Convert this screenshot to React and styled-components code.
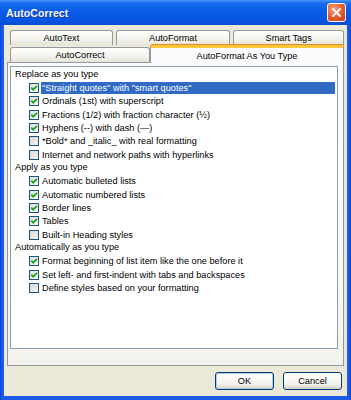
import React from "react";
import styled, { createGlobalStyle } from "styled-components";

const GlobalStyle = createGlobalStyle`
  html, body {
    margin: 0;
    padding: 0;
    width: 351px;
    height: 400px;
    overflow: hidden;
    background: #0831d9;
  }
`;

const sections = [
  {
    title: "Replace as you type",
    items: [
      { label: "\"Straight quotes\" with \"smart quotes\"", checked: true, selected: true },
      { label: "Ordinals (1st) with superscript", checked: true },
      { label: "Fractions (1/2) with fraction character (½)", checked: true },
      { label: "Hyphens (--) with dash (—)", checked: true },
      { label: "*Bold* and _italic_ with real formatting", checked: false },
      { label: "Internet and network paths with hyperlinks", checked: false },
    ],
  },
  {
    title: "Apply as you type",
    items: [
      { label: "Automatic bulleted lists", checked: true },
      { label: "Automatic numbered lists", checked: true },
      { label: "Border lines", checked: true },
      { label: "Tables", checked: true },
      { label: "Built-in Heading styles", checked: false },
    ],
  },
  {
    title: "Automatically as you type",
    items: [
      { label: "Format beginning of list item like the one before it", checked: true },
      { label: "Set left- and first-indent with tabs and backspaces", checked: true },
      { label: "Define styles based on your formatting", checked: false },
    ],
  },
];

export default function App() {
  return (
    <>
      <GlobalStyle />
      <Window>
        <TitleBar>
          <Title>AutoCorrect</Title>
          <CloseButton>
            <svg width="9" height="9" viewBox="0 0 9 9">
              <path d="M1 1 L8 8 M8 1 L1 8" stroke="#fff" strokeWidth="1.8" strokeLinecap="square" />
            </svg>
          </CloseButton>
        </TitleBar>
        <Body>
          <TabStrip>
            <TabRow>
              <Tab $w={103}>AutoText</Tab>
              <Tab $w={115}>AutoFormat</Tab>
              <Tab $w={111}>Smart Tags</Tab>
            </TabRow>
            <FrontRow>
              <Tab $w={140}>AutoCorrect</Tab>
              <ActiveTab $w={194}>AutoFormat As You Type</ActiveTab>
            </FrontRow>
          </TabStrip>
          <Panel>
            <ListBox>
              {sections.map((s) => (
                <React.Fragment key={s.title}>
                  <Heading>{s.title}</Heading>
                  {s.items.map((it) => (
                    <Item key={it.label}>
                      <Check $on={it.checked}>
                        {it.checked && (
                          <svg width="8" height="8" viewBox="0 0 8 8">
                            <path d="M1.2 3.6 L3.2 5.7 L7 1.8" fill="none" stroke="#21a121" strokeWidth="1.8" />
                          </svg>
                        )}
                      </Check>
                      <Label $selected={it.selected}>{it.label}</Label>
                    </Item>
                  ))}
                </React.Fragment>
              ))}
            </ListBox>
          </Panel>
          <ButtonRow>
            <Button $default>OK</Button>
            <Button>Cancel</Button>
          </ButtonRow>
        </Body>
      </Window>
    </>
  );
}

const Window = styled.div`
  width: 351px;
  height: 400px;
  box-sizing: border-box;
  display: flex;
  flex-direction: column;
  padding: 0 4px 4px 4px;
  background: linear-gradient(90deg, #0a3fd6 0, #1c5ae8 2px, #1c5ae8 calc(100% - 2px), #0a3fd6 100%);
  font-family: "Liberation Sans", Arial, sans-serif;
`;

const TitleBar = styled.div`
  height: 25px;
  margin: 0 -4px;
  padding: 0 5px 0 6px;
  display: flex;
  align-items: center;
  justify-content: space-between;
  background: linear-gradient(#4a94fa 0, #1a6cee 3px, #0a5de6 40%, #0654e0 85%, #0a4ad0 100%);
`;

const Title = styled.span`
  color: #fff;
  font-weight: bold;
  font-size: 10.5px;
  text-shadow: 1px 1px 0 #0b3aa8;
  letter-spacing: 0.1px;
`;

const CloseButton = styled.div`
  width: 17px;
  height: 17px;
  border: 1px solid #fff;
  border-radius: 3px;
  display: flex;
  align-items: center;
  justify-content: center;
  background: radial-gradient(circle at 35% 30%, #f5a283 0, #e45a30 55%, #cc3c1a 100%);
`;

const Body = styled.div`
  flex: 1;
  display: flex;
  flex-direction: column;
  background: #ece9d8;
  padding: 6px 3px 6px 3px;
`;

const TabStrip = styled.div`
  display: flex;
  flex-direction: column;
  padding-left: 3px;
`;

const TabRow = styled.div`
  display: flex;
  gap: 3px;
  height: 15px;
  align-items: flex-end;
`;

const FrontRow = styled.div`
  display: flex;
  height: 18px;
  margin-top: -1px;
  margin-bottom: -1px;
  align-items: flex-end;
  position: relative;
  z-index: 1;
`;

const Tab = styled.div`
  width: ${(p) => p.$w}px;
  height: 15px;
  box-sizing: border-box;
  border: 1px solid #919b9c;
  border-bottom: none;
  border-radius: 3px 3px 0 0;
  background: linear-gradient(#ffffff, #f3f2ec 60%, #e6e4d8);
  font-size: 9.2px;
  color: #000;
  display: flex;
  align-items: center;
  justify-content: center;
  margin-bottom: 1px;
`;

const ActiveTab = styled.div`
  width: ${(p) => p.$w}px;
  height: 18px;
  box-sizing: border-box;
  border: 1px solid #919b9c;
  border-top: 3px solid #ffc83c;
  border-bottom: none;
  border-radius: 3px 3px 0 0;
  background: #fcfcfe;
  box-shadow: 0 -1px 0 #e68b2c;
  font-size: 9.2px;
  color: #000;
  display: flex;
  align-items: center;
  justify-content: center;
`;

const Panel = styled.div`
  flex: 1;
  border: 1px solid #919b9c;
  background: linear-gradient(#fcfcfe 0, #fafaf8 60%, #f3f2ec 100%);
  padding: 3px 5px 16px 2px;
  display: flex;
`;

const ListBox = styled.div`
  flex: 1;
  background: #fff;
  border: 1px solid #8d9eaf;
  padding: 1px 2px 0 4px;
  display: flex;
  flex-direction: column;
`;

const Heading = styled.div`
  height: 13.35px;
  line-height: 13.35px;
  font-size: 9.2px;
  color: #000;
  white-space: nowrap;
`;

const Item = styled.div`
  height: 13.35px;
  display: flex;
  align-items: center;
  padding-left: 14px;
`;

const Check = styled.div`
  width: 10px;
  height: 10px;
  box-sizing: border-box;
  border: 1px solid #1c5180;
  background: ${(p) =>
    p.$on ? "linear-gradient(135deg, #dcdcd7, #ffffff)" : "linear-gradient(135deg, #d8d8d2, #f4f4f0)"};
  display: flex;
  align-items: center;
  justify-content: center;
  flex-shrink: 0;
`;

const Label = styled.div`
  flex: 1;
  margin-left: 2px;
  padding-left: 1px;
  height: 12px;
  line-height: 12px;
  font-size: 9.2px;
  white-space: nowrap;
  color: ${(p) => (p.$selected ? "#fff" : "#000")};
  background: ${(p) => (p.$selected ? "#316ac5" : "transparent")};
`;

const ButtonRow = styled.div`
  height: 18px;
  margin-top: 6px;
  display: flex;
  justify-content: flex-end;
  gap: 9px;
  padding-right: 2px;
`;

const Button = styled.div`
  width: 59px;
  height: 18px;
  box-sizing: border-box;
  border: 1px solid #003c74;
  border-radius: 3px;
  background: linear-gradient(#ffffff, #f4f3ee 70%, #d6d0c5);
  box-shadow: ${(p) => (p.$default ? "inset 0 0 0 1px #b3cbef" : "none")};
  font-size: 9.2px;
  color: #000;
  display: flex;
  align-items: center;
  justify-content: center;
`;
